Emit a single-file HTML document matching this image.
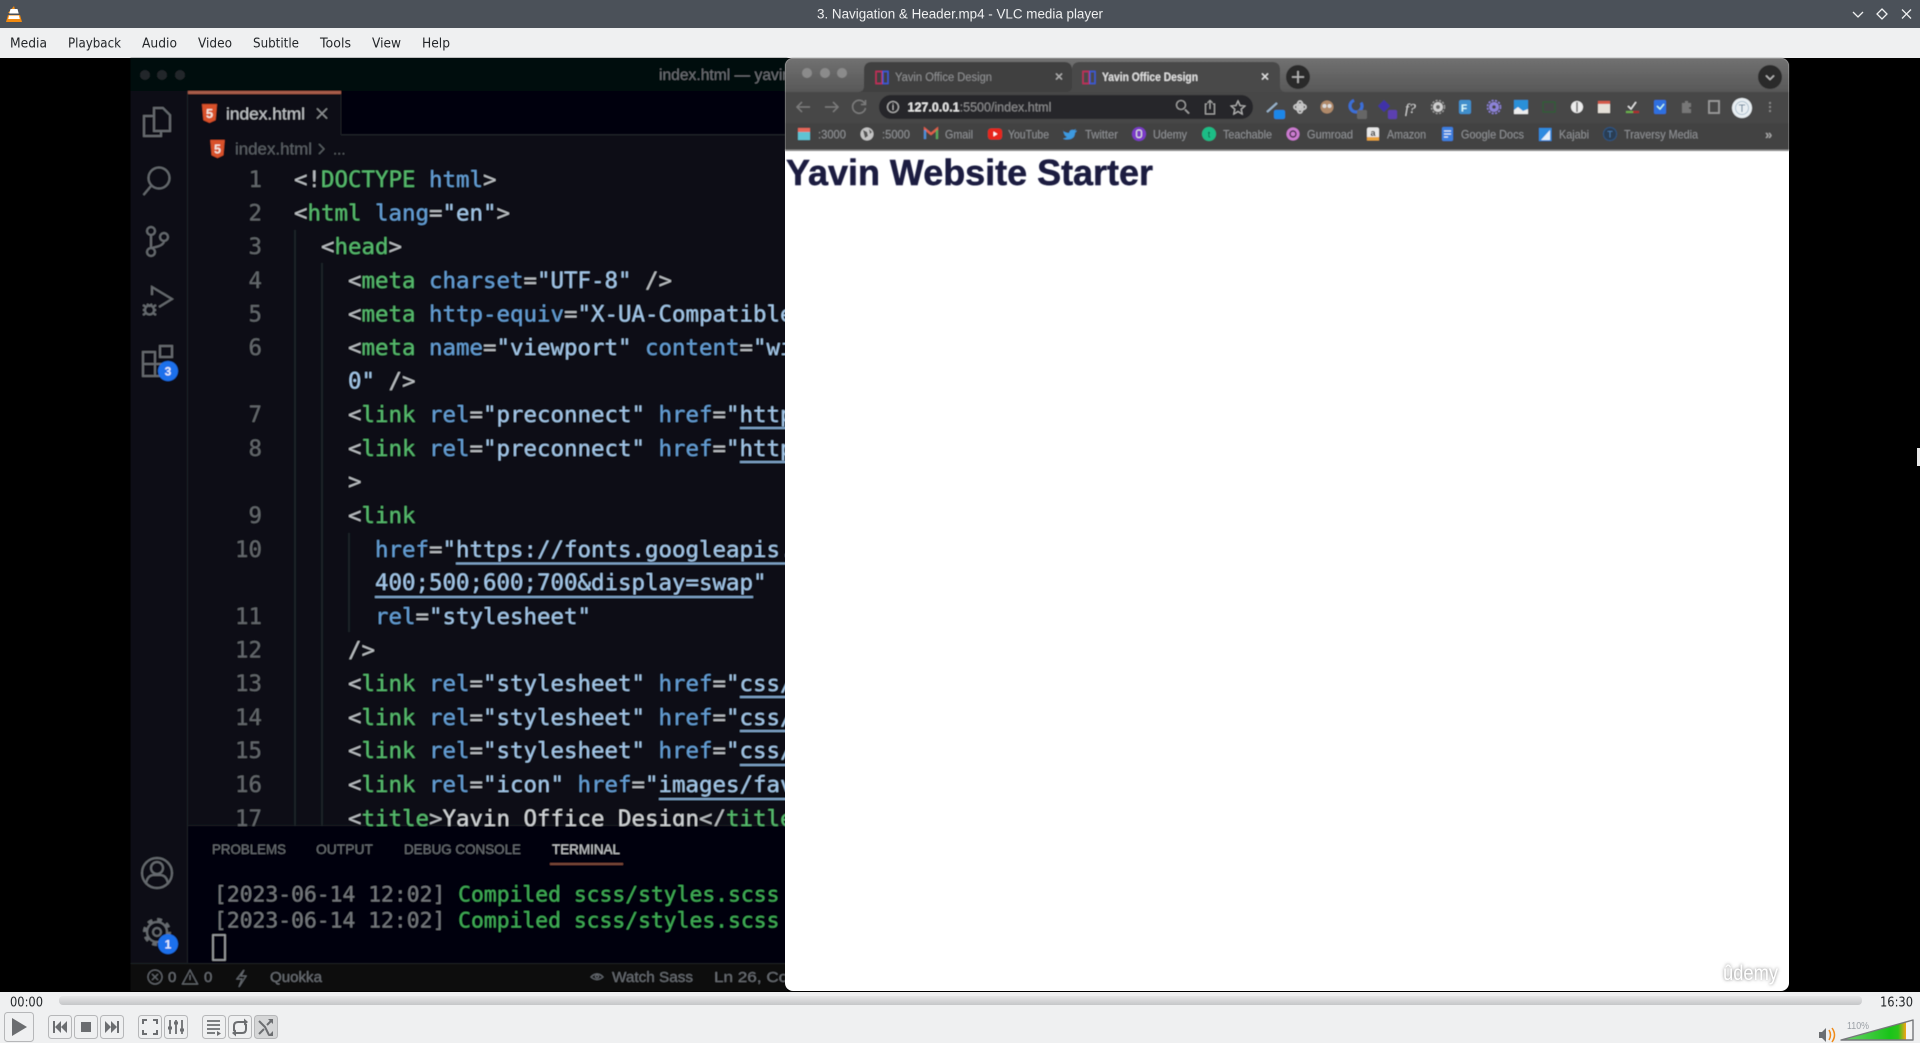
<!DOCTYPE html>
<html lang="en">
<head>
<meta charset="utf-8">
<title>3. Navigation &amp; Header.mp4 - VLC media player</title>
<style>
html,body{margin:0;padding:0;background:#000;width:1920px;height:1043px;overflow:hidden}
svg{display:block}
text{white-space:pre}
.ui{font-family:"Liberation Sans","Noto Sans CJK SC",sans-serif}
.vl{font-family:"DejaVu Sans","Liberation Sans",sans-serif;font-size:13px;fill:#232629}
.m{font-family:"DejaVu Sans Mono","Liberation Mono",monospace;font-size:22.43px;font-weight:400}
.t{font-family:"DejaVu Sans Mono","Liberation Mono",monospace;font-size:21.35px}
.p{fill:#bcc0c4}.g{fill:#56bb6d}.b{fill:#659fd6}.s{fill:#a4c8ea}.w{fill:#d2d5d8}
.n{font-family:"DejaVu Sans Mono","Liberation Mono",monospace;font-size:22.43px;fill:#63676c;text-anchor:end}
.bm{font-family:"Liberation Sans",sans-serif;font-size:12px;fill:#8f9194}
.ic{fill:none;stroke:#666a6f;stroke-width:2}
.vi{fill:#6b6d70}
.vb{fill:#eff0f1;stroke:#b6b7b9;stroke-width:1}
.gd{stroke:#24282c;stroke-width:1.2}
</style>
</head>
<body>
<svg xmlns="http://www.w3.org/2000/svg" width="1920" height="1043" viewBox="0 0 1920 1043">
<defs>
<filter id="bl" filterUnits="userSpaceOnUse" x="0" y="0" width="1920" height="1043"><feGaussianBlur stdDeviation="0.55"/></filter>
<filter id="sh" filterUnits="userSpaceOnUse" x="1700" y="950" width="120" height="50"><feGaussianBlur stdDeviation="1.6"/></filter>
<linearGradient id="tb" x1="0" y1="0" x2="0" y2="1"><stop offset="0" stop-color="#717171"/><stop offset="1" stop-color="#585858"/></linearGradient>
<linearGradient id="sl" x1="0" y1="0" x2="0" y2="1"><stop offset="0" stop-color="#e6e7e8"/><stop offset="1" stop-color="#c5c6c8"/></linearGradient>
<linearGradient id="vol" x1="0" y1="0" x2="1" y2="0"><stop offset="0" stop-color="#6fd26f"/><stop offset=".75" stop-color="#19c419"/><stop offset=".88" stop-color="#2cc41a"/><stop offset="1" stop-color="#f7a414"/></linearGradient>
<symbol id="h5" viewBox="0 0 16 20"><path d="M0 0h16l-1.500 17L8 20l-6.500-3z" fill="#d9512c"/><text x="8" y="15" text-anchor="middle" font-family="Liberation Sans,sans-serif" font-weight="700" font-size="14" fill="#f4e6df">5</text></symbol>
</defs>

<!-- VLC chrome -->
<rect width="1920" height="28" fill="#4b5159"/>
<rect y="28" width="1920" height="30" fill="#eff0f1"/>
<rect y="58" width="1920" height="934" fill="#000"/>
<path d="M14 6l2 7H8z" fill="#f28a10"/><path d="M8 15h12l2 7H6z" fill="#f28a10"/>
<path d="M10.500 9h7l1.200 4.500H9.300z" fill="#fff"/><path d="M9 15.500h10l.8 3.500H8.200z" fill="#fff"/>
<text class="ui" x="817" y="18.500" font-size="13.500" fill="#eff0f1" textLength="286" lengthAdjust="spacingAndGlyphs">3. Navigation &amp; Header.mp4 - VLC media player</text>
<path d="M1853 12l5 5 5-5M1882 9l5 5-5 5-5-5zM1902 9.500l9 9M1911 9.500l-9 9" fill="none" stroke="#eff0f1" stroke-width="1.300"/>

<g class="vl">
<text x="10" y="47.500" textLength="37" lengthAdjust="spacingAndGlyphs">Media</text>
<text x="68" y="47.500" textLength="53" lengthAdjust="spacingAndGlyphs">Playback</text>
<text x="142" y="47.500" textLength="35" lengthAdjust="spacingAndGlyphs">Audio</text>
<text x="198" y="47.500" textLength="34" lengthAdjust="spacingAndGlyphs">Video</text>
<text x="253" y="47.500" textLength="46" lengthAdjust="spacingAndGlyphs">Subtitle</text>
<text x="320" y="47.500" textLength="31" lengthAdjust="spacingAndGlyphs">Tools</text>
<text x="372" y="47.500" textLength="29" lengthAdjust="spacingAndGlyphs">View</text>
<text x="422" y="47.500" textLength="28" lengthAdjust="spacingAndGlyphs">Help</text>
</g>

<!-- VS Code -->
<g filter="url(#bl)">
<rect x="130.500" y="58" width="657" height="933" fill="#0d1117"/>
<rect x="130.500" y="58" width="657" height="33" fill="#05080b"/>
<rect x="130.500" y="91" width="57" height="900" fill="#0b0e13"/>
<rect x="187" y="91" width="600" height="44" fill="#03060a"/>
<rect x="187" y="91" width="154" height="44" fill="#0d1117"/>
<rect x="187" y="91" width="154" height="3" fill="#a85c48"/>
<rect x="341" y="134" width="450" height="1.500" fill="#1e2226"/>
<rect x="340.500" y="94" width="1" height="41" fill="#1e2226"/>
<rect x="187" y="91" width="1" height="900" fill="#1e2226"/>
<circle cx="145" cy="75" r="5" fill="#22262a"/><circle cx="162" cy="75" r="5" fill="#22262a"/><circle cx="180" cy="75" r="5" fill="#22262a"/>
<text class="ui" x="659" y="80" font-size="16" fill="#6d7176" textLength="132" lengthAdjust="spacingAndGlyphs">index.html — yavin</text>

<use href="#h5" x="202" y="104" width="15" height="19"/>
<text class="ui" x="226" y="119.500" font-size="17" fill="#c3c6c9" textLength="79" lengthAdjust="spacingAndGlyphs">index.html</text>
<path d="M317 108.500l10 10M327 108.500l-10 10" stroke="#8f9295" stroke-width="1.300"/>
<use href="#h5" x="210" y="140" width="15" height="18"/>
<text class="ui" x="235" y="154.500" font-size="16.500" fill="#5c6066" textLength="77" lengthAdjust="spacingAndGlyphs">index.html</text>
<path d="M319 144l5 5-5 5" fill="none" stroke="#5c6066" stroke-width="1.300"/>
<text class="ui" x="333" y="154.500" font-size="15" fill="#5c6066">...</text>

<!-- guides -->
<line class="gd" x1="295" y1="230" x2="295" y2="826"/>
<line class="gd" x1="322" y1="263" x2="322" y2="826"/>
<line class="gd" x1="349" y1="533" x2="349" y2="632"/>
<line class="gd" x1="187" y1="826" x2="785" y2="826"/>

<!-- line numbers -->
<text class="n" x="262" y="187">1</text>
<text class="n" x="262" y="220.500">2</text>
<text class="n" x="262" y="254">3</text>
<text class="n" x="262" y="288">4</text>
<text class="n" x="262" y="321.500">5</text>
<text class="n" x="262" y="355">6</text>
<text class="n" x="262" y="422">7</text>
<text class="n" x="262" y="456">8</text>
<text class="n" x="262" y="523">9</text>
<text class="n" x="262" y="557">10</text>
<text class="n" x="262" y="624">11</text>
<text class="n" x="262" y="657.500">12</text>
<text class="n" x="262" y="691">13</text>
<text class="n" x="262" y="725">14</text>
<text class="n" x="262" y="758">15</text>
<text class="n" x="262" y="792">16</text>
<text class="n" x="262" y="826">17</text>

<!-- code -->
<g class="m">
<text x="294" y="187"><tspan class="p">&lt;!</tspan><tspan class="g">DOCTYPE</tspan> <tspan class="b">html</tspan><tspan class="p">&gt;</tspan></text>
<text x="294" y="220.500"><tspan class="p">&lt;</tspan><tspan class="g">html</tspan> <tspan class="b">lang</tspan><tspan class="p">=</tspan><tspan class="s">"en"</tspan><tspan class="p">&gt;</tspan></text>
<text x="321" y="254"><tspan class="p">&lt;</tspan><tspan class="g">head</tspan><tspan class="p">&gt;</tspan></text>
<text x="348" y="288"><tspan class="p">&lt;</tspan><tspan class="g">meta</tspan> <tspan class="b">charset</tspan><tspan class="p">=</tspan><tspan class="s">"UTF-8"</tspan> <tspan class="p">/&gt;</tspan></text>
<text x="348" y="321.500"><tspan class="p">&lt;</tspan><tspan class="g">meta</tspan> <tspan class="b">http-equiv</tspan><tspan class="p">=</tspan><tspan class="s">"X-UA-Compatible"</tspan></text>
<text x="348" y="355"><tspan class="p">&lt;</tspan><tspan class="g">meta</tspan> <tspan class="b">name</tspan><tspan class="p">=</tspan><tspan class="s">"viewport"</tspan> <tspan class="b">content</tspan><tspan class="p">=</tspan><tspan class="s">"width</tspan></text>
<text x="348" y="388.500"><tspan class="s">0"</tspan> <tspan class="p">/&gt;</tspan></text>
<text x="348" y="422"><tspan class="p">&lt;</tspan><tspan class="g">link</tspan> <tspan class="b">rel</tspan><tspan class="p">=</tspan><tspan class="s">"preconnect"</tspan> <tspan class="b">href</tspan><tspan class="p">=</tspan><tspan class="s">"https</tspan></text>
<text x="348" y="456"><tspan class="p">&lt;</tspan><tspan class="g">link</tspan> <tspan class="b">rel</tspan><tspan class="p">=</tspan><tspan class="s">"preconnect"</tspan> <tspan class="b">href</tspan><tspan class="p">=</tspan><tspan class="s">"https</tspan></text>
<text x="348" y="489"><tspan class="p">&gt;</tspan></text>
<text x="348" y="523"><tspan class="p">&lt;</tspan><tspan class="g">link</tspan></text>
<text x="375" y="557"><tspan class="b">href</tspan><tspan class="p">=</tspan><tspan class="s">"https://fonts.googleapis.com</tspan></text>
<text x="375" y="590"><tspan class="s">400;500;600;700&amp;display=swap"</tspan></text>
<text x="375" y="624"><tspan class="b">rel</tspan><tspan class="p">=</tspan><tspan class="s">"stylesheet"</tspan></text>
<text x="348" y="657.500"><tspan class="p">/&gt;</tspan></text>
<text x="348" y="691"><tspan class="p">&lt;</tspan><tspan class="g">link</tspan> <tspan class="b">rel</tspan><tspan class="p">=</tspan><tspan class="s">"stylesheet"</tspan> <tspan class="b">href</tspan><tspan class="p">=</tspan><tspan class="s">"css/ut</tspan></text>
<text x="348" y="725"><tspan class="p">&lt;</tspan><tspan class="g">link</tspan> <tspan class="b">rel</tspan><tspan class="p">=</tspan><tspan class="s">"stylesheet"</tspan> <tspan class="b">href</tspan><tspan class="p">=</tspan><tspan class="s">"css/st</tspan></text>
<text x="348" y="758"><tspan class="p">&lt;</tspan><tspan class="g">link</tspan> <tspan class="b">rel</tspan><tspan class="p">=</tspan><tspan class="s">"stylesheet"</tspan> <tspan class="b">href</tspan><tspan class="p">=</tspan><tspan class="s">"css/st</tspan></text>
<text x="348" y="792"><tspan class="p">&lt;</tspan><tspan class="g">link</tspan> <tspan class="b">rel</tspan><tspan class="p">=</tspan><tspan class="s">"icon"</tspan> <tspan class="b">href</tspan><tspan class="p">=</tspan><tspan class="s">"images/favicon</tspan></text>
<text x="348" y="826"><tspan class="p">&lt;</tspan><tspan class="g">title</tspan><tspan class="p">&gt;</tspan><tspan class="w">Yavin Office Design</tspan><tspan class="p">&lt;/</tspan><tspan class="g">title</tspan></text>
</g>
<g fill="#7ea3c8">
<rect x="740" y="427" width="46" height="2"/><rect x="740" y="461" width="46" height="2"/>
<rect x="456" y="562.500" width="330" height="2"/><rect x="375" y="596" width="378" height="2"/>
<rect x="740" y="696" width="46" height="2"/><rect x="740" y="730" width="46" height="2"/><rect x="740" y="764" width="46" height="2"/>
<rect x="659" y="798" width="127" height="2"/>
</g>

<!-- panel -->
<rect x="187" y="826" width="600" height="137" fill="#03060a"/>
<rect x="130.500" y="826" width="56.500" height="137" fill="#0b0e13"/>
<rect x="187" y="826" width="1" height="137" fill="#1e2226"/>
<g class="ui" font-size="14">
<text x="212" y="854" fill="#6b6f74" textLength="74" lengthAdjust="spacingAndGlyphs">PROBLEMS</text>
<text x="316" y="854" fill="#6b6f74" textLength="57" lengthAdjust="spacingAndGlyphs">OUTPUT</text>
<text x="404" y="854" fill="#6b6f74" textLength="117" lengthAdjust="spacingAndGlyphs">DEBUG CONSOLE</text>
<text x="552" y="854" fill="#c8cbce" textLength="68" lengthAdjust="spacingAndGlyphs">TERMINAL</text>
</g>
<rect x="550" y="863" width="73" height="2" fill="#7a4638"/>
<text class="t" x="214" y="901.500"><tspan fill="#74787d">[2023-06-14 12:02]</tspan> <tspan fill="#3fae56">Compiled scss/styles.scss</tspan></text>
<text class="t" x="214" y="927.500"><tspan fill="#74787d">[2023-06-14 12:02]</tspan> <tspan fill="#3fae56">Compiled scss/styles.scss</tspan></text>
<rect x="213" y="935" width="12" height="25" fill="none" stroke="#a4a7aa" stroke-width="1.600"/>

<!-- status -->
<rect x="130.500" y="963" width="657" height="28" fill="#0a0c10"/>
<rect x="130.500" y="963" width="657" height="1" fill="#1e2226"/>
<g class="ic" style="stroke-width:1.100">
<circle cx="155" cy="977" r="7"/><path d="M152 974l6 6M158 974l-6 6"/>
<path d="M190 970l7.500 14h-15zM190 975v5"/>
<path d="M244 970l-7 9h5l-3 8 7-11h-5l3-6z"/>
<path d="M591 977q6-6 12 0q-6 5-12 0z"/><circle cx="597" cy="976.500" r="1.500"/>
</g>
<g class="ui" font-size="15" fill="#6c7075">
<text x="168" y="982">0</text><text x="204" y="982">0</text>
<text x="270" y="982" textLength="52" lengthAdjust="spacingAndGlyphs">Quokka</text>
<text x="612" y="982" textLength="81" lengthAdjust="spacingAndGlyphs">Watch Sass</text>
<text x="714" y="982" textLength="78" lengthAdjust="spacingAndGlyphs">Ln 26, Col</text>
</g>

<!-- activity icons -->
<g class="ic">
<path d="M154 108h9l7 7v16h-16zM154 116h-10v20h17v-5"/>
<circle cx="159" cy="178" r="10.500"/><path d="M151 186l-7.500 9"/>
<circle cx="151" cy="231" r="4"/><circle cx="151" cy="252" r="4"/><circle cx="164" cy="237" r="4"/>
<path d="M151 235v13M164 241q0 5-13 7"/>
<path d="M152 295v-8l20 12-13 8"/><circle cx="149.500" cy="310" r="4.500"/><path d="M143 305l3 2M143 310h2M143 315l3-2M156 305l-3 2M156 310h-2M156 315l-3-2M147 304l2.500 2 2.500-2"/>
<path d="M143 352h12v24h-12zM143 364h23v12h-11"/><rect x="160" y="346" width="12" height="11"/>
<circle cx="157" cy="873" r="15"/><circle cx="157" cy="868" r="6"/><path d="M146 884q1-8 7-9h8q6 1 7 9"/>
<circle cx="157" cy="932" r="4"/><circle cx="157" cy="932" r="10"/><circle cx="157" cy="932" r="12" stroke-width="4" stroke-dasharray="4.500 4.900"/>
</g>
<circle cx="168" cy="371" r="10" fill="#1f6feb"/>
<text class="ui" x="168" y="375.500" font-size="12" font-weight="700" fill="#e6eefc" text-anchor="middle">3</text>
<circle cx="168" cy="944" r="10" fill="#1f6feb"/>
<text class="ui" x="168" y="948.500" font-size="12" font-weight="700" fill="#e6eefc" text-anchor="middle">1</text>
</g>

<!-- Browser -->
<rect x="785" y="58" width="1004" height="933" rx="8" fill="#fff"/>
<g filter="url(#bl)">
<path d="M785 66a8 8 0 0 1 8-8h988a8 8 0 0 1 8 8v26H785z" fill="url(#tb)"/>
<rect x="785" y="92" width="1004" height="31" fill="#474747"/>
<rect x="785" y="123" width="1004" height="27" fill="#424242"/>
<rect x="785" y="149.500" width="1004" height="1.500" fill="#8b8b8b"/>
<circle cx="807" cy="73" r="5" fill="#8b8b8b"/><circle cx="825" cy="73" r="5" fill="#8b8b8b"/><circle cx="842" cy="73" r="5" fill="#8b8b8b"/>
<path d="M858 92q6 0 6-6V70q0-8 8-8h192q8 0 8 8v22z" fill="#3f3f3f"/>
<path d="M1066 92q6 0 6-6V70q0-8 8-8h192q8 0 8 8v16q0 6 6 6z" fill="#484848"/>
<g fill="none" stroke-width="1.400">
<path d="M876 71.500h6v12h-6z" stroke="#c92a5c"/><path d="M883 71.500h5v12h-5z" stroke="#3b5bdb"/>
<path d="M1083 71.500h6v12h-6z" stroke="#c92a5c"/><path d="M1090 71.500h5v12h-5z" stroke="#3b5bdb"/>
</g>
<g class="ui">
<text x="895" y="81" font-size="11.500" fill="#8f9092" textLength="97" lengthAdjust="spacingAndGlyphs">Yavin Office Design</text>
<text x="1102" y="81" font-size="11.500" fill="#e0e0e0" font-weight="700" textLength="96" lengthAdjust="spacingAndGlyphs">Yavin Office Design</text>
</g>
<path d="M1056 73.500l6 6M1062 73.500l-6 6" stroke="#b0b0b0" stroke-width="1.300"/>
<path d="M1262 73.500l6 6M1268 73.500l-6 6" stroke="#e4e4e4" stroke-width="1.300"/>
<circle cx="1298" cy="77" r="12" fill="#2b2b2b"/><path d="M1298 71v12M1292 77h12" stroke="#b8b8b8" stroke-width="1.600"/>
<circle cx="1770" cy="77" r="12" fill="#2b2b2b"/><path d="M1766 75.500l4 4 4-4" fill="none" stroke="#b8b8b8" stroke-width="1.500"/>

<path d="M810 107h-13m5-5l-5 5 5 5M825 107h13m-5-5l5 5-5 5" fill="none" stroke="#7b7b7b" stroke-width="1.500"/>
<path d="M865 104a6.500 6.500 0 1 0 .5 4M865.500 100v4.500h-4.500" fill="none" stroke="#7b7b7b" stroke-width="1.500"/>
<rect x="879" y="95" width="374" height="24" rx="12" fill="#26272a"/>
<circle cx="893" cy="107" r="5.500" fill="none" stroke="#b5b5b5" stroke-width="1.100"/><path d="M893 105v5M893 103.500v.8" stroke="#b5b5b5" stroke-width="1.100"/>
<text class="ui" x="907.500" y="111.500" font-size="12.500"><tspan font-weight="700" fill="#e9e9e9">127.0.0.1</tspan><tspan fill="#8c8c8e">:5500/index.html</tspan></text>
<path d="M1185 109.500l4 4" stroke="#a8a8a8" stroke-width="1.500"/><circle cx="1181" cy="105" r="4.500" fill="none" stroke="#a8a8a8" stroke-width="1.100"/>
<path d="M1207 104h-1.500v10h9v-10H1213M1210 109v-8m-2.500 2l2.500-2.500 2.500 2.500" fill="none" stroke="#a8a8a8" stroke-width="1.100"/>
<path d="M1238 101l2 4.500 4.800.5-3.600 3.200 1 4.800-4.200-2.500-4.200 2.500 1-4.800-3.600-3.200 4.800-.5z" fill="none" stroke="#b8b8b8" stroke-width="1.100"/>

<!-- extensions -->
<path d="M1267 112l10-9" stroke="#9ab4cc" stroke-width="2"/><rect x="1274" y="110" width="11" height="9" rx="2" fill="#1f87e8"/>
<ellipse cx="1300" cy="107" rx="6" ry="3" fill="none" stroke="#c9c9c9" stroke-width="1.600"/><ellipse cx="1300" cy="107" rx="3" ry="6" fill="none" stroke="#c9c9c9" stroke-width="1.600"/><circle cx="1300" cy="107" r="2.500" fill="#c9c9c9"/>
<circle cx="1327" cy="107" r="6.500" fill="#b08a6a"/><circle cx="1324.500" cy="106" r="2" fill="#ddd"/><circle cx="1329.500" cy="106" r="2" fill="#ddd"/>
<circle cx="1356" cy="106" r="6" fill="none" stroke="#3a70d8" stroke-width="3" stroke-dasharray="26 8"/><rect x="1357" y="110" width="10" height="9" rx="1.500" fill="#666"/>
<path d="M1378 106l6-6 6 6-6 6z" fill="#3f31a8"/><rect x="1388" y="110" width="9" height="9" rx="1.500" fill="#5c3fb0"/>
<text x="1405" y="113" font-family="Liberation Serif,serif" font-style="italic" font-size="14" fill="#d2d2d2">f?</text>
<circle cx="1438" cy="107" r="5" fill="#cfcfcf"/><circle cx="1438" cy="107" r="6.500" fill="none" stroke="#999" stroke-width="1.500" stroke-dasharray="2 1.500"/><circle cx="1438" cy="107" r="2" fill="#666"/>
<rect x="1459" y="100" width="12" height="14" rx="2" fill="#3f8fcc"/>
<text x="1461" y="111.500" font-family="Liberation Sans,sans-serif" font-size="10" font-weight="700" fill="#dff">F</text>
<circle cx="1494" cy="107" r="5" fill="#8d83d8"/><circle cx="1494" cy="107" r="6.500" fill="none" stroke="#8d83d8" stroke-width="1.500" stroke-dasharray="2 1.500"/><circle cx="1494" cy="107" r="1.800" fill="#444"/>
<rect x="1514" y="100" width="14" height="14" fill="#2a90d8"/><path d="M1514 110l4-3 5 4 5-2v5h-14z" fill="#eee"/>
<rect x="1543" y="102" width="12" height="10" fill="none" stroke="#2f5f36" stroke-width="1.200"/>
<circle cx="1577" cy="107" r="6" fill="#ececec"/><path d="M1577 102v10" stroke="#666" stroke-width="1.500"/>
<rect x="1598" y="101" width="12" height="12" fill="#e5e0d8"/><rect x="1598" y="101" width="12" height="3" fill="#d65a4a"/>
<path d="M1628 106l3 3 5-7" fill="none" stroke="#e6e6e6" stroke-width="1.500"/><rect x="1626" y="111" width="7" height="2" fill="#6ab04c"/><rect x="1633" y="111" width="6" height="2" fill="#b02a2a"/>
<rect x="1654" y="100" width="12" height="14" rx="1.500" fill="#2e6fe0"/><path d="M1657 106l3 3 4-5" fill="none" stroke="#cfe" stroke-width="1.300"/>
<path d="M1682 103h3v-2h3v2h3v4h-2v2h2v4h-9z" fill="#777"/>
<rect x="1709" y="101" width="10" height="12" fill="none" stroke="#9c9c9c" stroke-width="1.700"/>
<circle cx="1742" cy="108" r="10" fill="#e8eef2"/><circle cx="1742" cy="108" r="6.500" fill="none" stroke="#9fb6c6" stroke-width=".8"/><text class="ui" x="1742" y="112" text-anchor="middle" font-size="11" fill="#5c7c94">T</text>
<circle cx="1770" cy="103" r="1.100" fill="#888"/><circle cx="1770" cy="107" r="1.100" fill="#888"/><circle cx="1770" cy="111" r="1.100" fill="#888"/>

<!-- bookmarks -->
<g transform="translate(0,-1)">
<rect x="798" y="129" width="12" height="12" fill="#5fc3d3"/><rect x="798" y="129" width="12" height="4" fill="#e5675a"/>
<circle cx="867" cy="135" r="6.500" fill="#c4c4c4"/><path d="M863 131l4 2 1 4-3 2zM869 130l3 3-2 2z" fill="#555"/>
<path d="M925 140v-10l6 5 6-5v10" fill="none" stroke="#e25f4a" stroke-width="2.200"/><path d="M925 140v-9" stroke="#4a90d9" stroke-width="2.200"/><path d="M937 140v-9" stroke="#54a95c" stroke-width="2.200"/>
<rect x="988" y="129.500" width="14" height="11" rx="3" fill="#e8261f"/><path d="M993.500 132.500l4 2.500-4 2.500z" fill="#fff"/>
<path d="M1063 132q3 2 6 2 1-4 5-3l2-1-1 2 2-.5q-1 2-2 2 0 7-8 7-3 0-4-1 2 0 4-1.500-3-1-4-7z" fill="#3d9ae0"/>
<circle cx="1139" cy="135" r="7" fill="#7c3bc8"/><rect x="1136.500" y="131" width="5" height="7.500" rx="2" fill="none" stroke="#ddd" stroke-width="1.200"/>
<circle cx="1209" cy="135" r="7" fill="#1ebd86"/><text class="ui" x="1209" y="138.500" text-anchor="middle" font-size="9" fill="#0a5a40">t</text>
<circle cx="1293" cy="135" r="6.500" fill="#cc7bd0"/><circle cx="1293" cy="135" r="3" fill="none" stroke="#3f2a44" stroke-width="1.400"/>
<rect x="1367" y="128.500" width="12" height="13" rx="2" fill="#e8e8e8"/><text class="ui" x="1373" y="137" text-anchor="middle" font-size="9" font-weight="700" fill="#222">a</text><rect x="1367" y="138" width="12" height="3.500" fill="#e8a33d"/>
<rect x="1442" y="128" width="11" height="14" rx="1.500" fill="#3d7fe0"/><path d="M1444 132h7M1444 135h7M1444 138h4" stroke="#dfe9f8" stroke-width="1.200"/>
<rect x="1539" y="129" width="12.500" height="13" fill="#2d8be0"/><path d="M1541 141l9-10v10z" fill="#e6f0fa"/>
<circle cx="1610" cy="135" r="6.500" fill="#2a3c52" stroke="#2c5686"/><text class="ui" x="1610" y="138.500" text-anchor="middle" font-size="9" fill="#4a7fb8">T</text>
<text class="bm" x="818" y="139.500" textLength="28" lengthAdjust="spacingAndGlyphs">:3000</text>
<text class="bm" x="882" y="139.500" textLength="28" lengthAdjust="spacingAndGlyphs">:5000</text>
<text class="bm" x="945" y="139.500" textLength="28" lengthAdjust="spacingAndGlyphs">Gmail</text>
<text class="bm" x="1008" y="139.500" textLength="41" lengthAdjust="spacingAndGlyphs">YouTube</text>
<text class="bm" x="1085" y="139.500" textLength="33" lengthAdjust="spacingAndGlyphs">Twitter</text>
<text class="bm" x="1153" y="139.500" textLength="34" lengthAdjust="spacingAndGlyphs">Udemy</text>
<text class="bm" x="1223" y="139.500" textLength="49" lengthAdjust="spacingAndGlyphs">Teachable</text>
<text class="bm" x="1307" y="139.500" textLength="46" lengthAdjust="spacingAndGlyphs">Gumroad</text>
<text class="bm" x="1387" y="139.500" textLength="39" lengthAdjust="spacingAndGlyphs">Amazon</text>
<text class="bm" x="1461" y="139.500" textLength="63" lengthAdjust="spacingAndGlyphs">Google Docs</text>
<text class="bm" x="1559" y="139.500" textLength="30" lengthAdjust="spacingAndGlyphs">Kajabi</text>
<text class="bm" x="1624" y="139.500" textLength="74" lengthAdjust="spacingAndGlyphs">Traversy Media</text>
<text class="ui" x="1765" y="140" font-size="13" font-weight="700" fill="#a8a8a8">»</text>
</g>

<text x="786" y="185" font-family="Liberation Sans,sans-serif" font-weight="700" font-size="36" fill="#1a1b41" stroke="#1a1b41" stroke-width=".5" textLength="367" lengthAdjust="spacingAndGlyphs">Yavin Website Starter</text>
</g>

<!-- Udemy watermark -->
<g font-family="Liberation Sans,sans-serif" font-size="21">
<text x="1723" y="980" fill="#777" filter="url(#sh)" textLength="55" lengthAdjust="spacingAndGlyphs">ûdemy</text>
<text x="1723" y="980" fill="#fff" textLength="55" lengthAdjust="spacingAndGlyphs">ûdemy</text>
</g>

<!-- Text cursor -->
<rect x="1917" y="448" width="3" height="18" fill="#e8e8e8"/>

<!-- VLC bottom controls -->
<rect y="992" width="1920" height="51" fill="#eff0f1"/>
<rect x="59" y="996" width="1803" height="9" rx="4" fill="url(#sl)"/>
<text class="vl" x="10" y="1006.500" textLength="33" lengthAdjust="spacingAndGlyphs">00:00</text>
<text class="vl" x="1880" y="1006.500" textLength="33" lengthAdjust="spacingAndGlyphs">16:30</text>

<rect class="vb" x="4.500" y="1012.500" width="29" height="29" rx="3"/>
<path class="vi" d="M12 1018l15 9-15 9z"/>
<rect class="vb" x="48.500" y="1015.500" width="23" height="23" rx="3"/>
<rect class="vb" x="74.500" y="1015.500" width="23" height="23" rx="3"/>
<rect class="vb" x="100.500" y="1015.500" width="23" height="23" rx="3"/>
<path class="vi" d="M53 1021h2v12h-2zM55 1027l6-6v12zM61 1027l6-6v12z"/>
<rect class="vi" x="81" y="1022" width="10" height="10"/>
<path class="vi" d="M105 1021l6 6-6 6zM111 1021l6 6-6 6zM117 1021h2v12h-2z"/>
<rect class="vb" x="138.500" y="1015.500" width="23" height="23" rx="3"/>
<rect class="vb" x="164.500" y="1015.500" width="23" height="23" rx="3"/>
<path d="M143 1024v-4h4M153 1020h4v4M157 1030v4h-4M147 1034h-4v-4" fill="none" stroke="#6b6d70" stroke-width="2"/>
<path d="M170 1020v14M176 1020v14M182 1020v14" stroke="#6b6d70" stroke-width="1.800"/>
<path d="M168 1028h4M174 1023h4M180 1030h4" stroke="#6b6d70" stroke-width="3"/>
<rect class="vb" x="202.500" y="1015.500" width="23" height="23" rx="3"/>
<rect class="vb" x="228.500" y="1015.500" width="23" height="23" rx="3"/>
<rect x="254.500" y="1015.500" width="23" height="23" rx="3" fill="#d5d6d7" stroke="#b6b7b9"/>
<path d="M207 1021h13M207 1025h13M207 1029h13M207 1033h8" stroke="#6b6d70" stroke-width="1.800"/><path class="vi" d="M217 1031l4 2.500-4 2.500z"/>
<path d="M234 1031v-5q0-4 4-4h7M246 1024v5q0 4-4 4h-7" fill="none" stroke="#6b6d70" stroke-width="2"/>
<path class="vi" d="M244 1018.500l4 3.500-4 3.500zM236 1029.500l-4 3.500 4 3.500z"/>
<path d="M259 1021l6 6 4 8M259 1034l5-5M267 1025l4-4" fill="none" stroke="#6b6d70" stroke-width="2"/>
<path class="vi" d="M268 1019h5v5zM268 1036h5v-5z"/>

<path d="M1819 1032h3l4-4v14l-4-4h-3z" fill="#6b6d70"/>
<path d="M1829 1030q3 5 0 10M1832 1028q5 7 0 14" fill="none" stroke="#f08a18" stroke-width="1.500"/>
<path d="M1841 1040l72-20v20z" fill="#f4f4f4"/>
<path d="M1841 1040l65-18.100v18.100z" fill="url(#vol)"/>
<path d="M1841 1040l72-20v20z" fill="none" stroke="#75777a" stroke-width="1.400" stroke-linejoin="round"/>
<text class="ui" x="1847" y="1029" font-size="10" fill="#9ba0a6" textLength="22" lengthAdjust="spacingAndGlyphs">110%</text>
</svg>
</body>
</html>
